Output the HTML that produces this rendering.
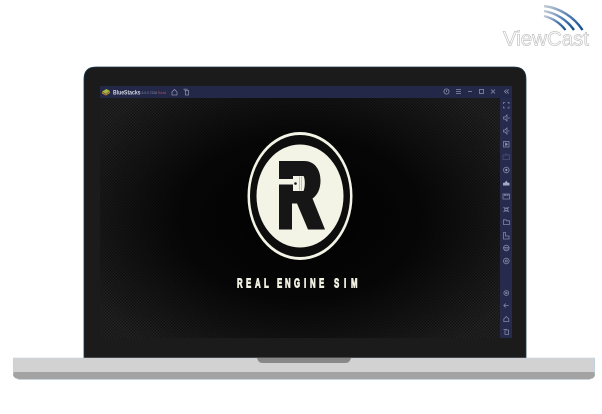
<!DOCTYPE html>
<html><head><meta charset="utf-8"><style>
html,body{margin:0;padding:0;background:#fff;width:602px;height:414px;overflow:hidden}
svg{display:block}
</style></head><body>
<svg width="602" height="414" viewBox="0 0 602 414" xmlns="http://www.w3.org/2000/svg">
<defs>
<pattern id="dot" width="3" height="3" patternUnits="userSpaceOnUse"><rect width="1.5" height="1.5" fill="#fff" fill-opacity=".075"/><rect x="1.5" y="1.5" width="1.5" height="1.5" fill="#fff" fill-opacity=".075"/></pattern>
<radialGradient id="vig" cx="300" cy="218" r="240" gradientUnits="userSpaceOnUse" gradientTransform="translate(300 218) scale(1 .68) translate(-300 -218)"><stop offset="0" stop-color="#000" stop-opacity=".97"/><stop offset=".5" stop-color="#000" stop-opacity=".8"/><stop offset="1" stop-color="#000" stop-opacity=".05"/></radialGradient>
<linearGradient id="arc" x1="0" y1="0" x2="1" y2="1"><stop offset="0" stop-color="#c4ccd6"/><stop offset=".5" stop-color="#5580b4"/><stop offset="1" stop-color="#124c8c"/></linearGradient>
<filter id="soft" x="-5%" y="-5%" width="110%" height="110%"><feGaussianBlur stdDeviation=".35"/></filter>
<filter id="soft2" x="-5%" y="-5%" width="110%" height="110%"><feGaussianBlur stdDeviation=".3"/></filter>
</defs>

<!-- ViewCast logo -->
<g fill="none" stroke="url(#arc)" stroke-linecap="butt" filter="url(#soft)">
<path d="M544 6C560 8 574 17 582.500 30" stroke-width="2.400"/>
<path d="M544 11C556 13 567 20 574 30" stroke-width="2.400"/>
<path d="M544 16C552 18 560 23 565.500 30" stroke-width="2.200"/>
</g>
<text x="503" y="45.500" font-family="Liberation Sans, sans-serif" font-size="20" fill="#fff" stroke="#c4c4c4" stroke-width=".7" textLength="86" lengthAdjust="spacingAndGlyphs" filter="url(#soft2)">ViewCast</text>

<!-- Laptop body -->
<path d="M84 358V79Q84 67 96 67H514Q526 67 526 79V358Z" fill="#1b1b1b"/>
<path d="M84 358V79Q84 67 96 67H514Q526 67 526 79V358" fill="none" stroke="#1c3a4f" stroke-width=".8"/>

<!-- Screen -->
<rect x="100" y="98" width="400" height="240" fill="#151515"/>
<rect x="100" y="98" width="400" height="240" fill="url(#dot)"/>
<rect x="100" y="98" width="400" height="240" fill="url(#vig)"/>

<!-- Title bar -->
<rect x="100" y="86" width="412" height="12" fill="#232848"/>
<rect x="500" y="98" width="12" height="240" fill="#262b4e"/>
<g filter="url(#soft2)">
<path d="M102 91.500L106.500 89L110 91L106 94Z" fill="#a5b83e"/>
<path d="M102 92L106 94.500L110 91.500V93L106 95.500L102 93.500Z" fill="#c98c2e"/>
<text x="113" y="94.500" font-family="Liberation Sans, sans-serif" font-size="6.300" font-weight="bold" fill="#d5d8e4" textLength="27.500" lengthAdjust="spacingAndGlyphs">BlueStacks</text>
<text x="141.500" y="94.200" font-family="Liberation Sans, sans-serif" font-size="3.800" fill="#8a8ea6" textLength="15.500" lengthAdjust="spacingAndGlyphs">5.0.0.7228</text>
<text x="158" y="94.200" font-family="Liberation Sans, sans-serif" font-size="3.800" fill="#a8515f" textLength="8" lengthAdjust="spacingAndGlyphs">Beta</text>
<g fill="none" stroke="#8b8fa9" stroke-width=".8">
<path d="M172 92L174.500 89.500L177 92V95H172Z"/>
<path d="M184.500 90.500H188.500V95H185.500V90.500"/><path d="M183.500 89.200H187.500"/>
<circle cx="446.500" cy="91.500" r="2.600"/><path d="M446.500 90V92"/>
<path d="M456 89.500H461M456 91.500H461M456 93.500H461"/>
<path d="M468 91.500H472"/>
<rect x="479.500" y="89.500" width="4" height="4"/>
<path d="M491 89.500L495 93.500M495 89.500L491 93.500"/>
<path d="M506.500 89.500L504.500 91.500L506.500 93.500M508.800 89.500L506.800 91.500L508.800 93.500"/>
</g>

<!-- Sidebar icons -->
<g fill="none" stroke="#8488a6" stroke-width=".8">
<path d="M503.500 104V102.500H505M507.500 102.500H509V104M509 106.500V108H507.500M505 108H503.500V106.500"/>
<path d="M503.500 117H505L507 115V121L505 119H503.500ZM508 118H510"/>
<path d="M503.500 130H505L507 128V134L505 132H503.500ZM508 131H509.500"/>
<rect x="503.500" y="141.500" width="5.500" height="5.500"/>
<path d="M505.500 143V145.500L507.500 144.200Z" fill="#d4d6e4"/>
<g opacity=".4"><rect x="503" y="155" width="6.500" height="4.500"/><path d="M506 155V153"/></g>
<circle cx="506.300" cy="170" r="2.800"/><circle cx="506.300" cy="170" r=".8" fill="#d4d6e4"/>
</g>
<path d="M503 185.500V183L505 182.500L506.200 180.500L507.500 182.500L509.500 183V185.500Z" fill="#a6a9c2"/>
<g fill="none" stroke="#8488a6" stroke-width=".8">
<path d="M503 194V199H509.500V194H508V195.500H507V194H505.500V195.500H504.500V194Z"/>
<path d="M503.500 207L505 208.500H507.500L509 207M503.500 212L505 210.500H507.500L509 212"/><rect x="504.800" y="208" width="3" height="3"/>
<path d="M503.500 224.500V219.800H506L506.800 220.800H509.500V224.500Z"/>
<path d="M503.500 232.500H505.500V236H509V239H503.500Z"/>
<circle cx="506.300" cy="248" r="2.800"/><path d="M504 247.500H508.500M504 249H508.500"/>
<circle cx="506.300" cy="261" r="2.800"/><circle cx="506.300" cy="261" r="1"/>
<circle cx="506.300" cy="293" r="2.400"/><circle cx="506.300" cy="293" r=".8"/>
<path d="M508.800 305.500H503.800M505.800 303.500L503.800 305.500L505.800 307.500"/>
<path d="M503.800 319L506.300 316.500L508.800 319V321.500H503.800Z"/>
<path d="M504.200 330H508.500V334.500H505V331"/><path d="M503.500 329.500H507"/>
</g>
</g>

<!-- Logo -->
<g filter="url(#soft2)">
<ellipse cx="300" cy="196" rx="52.500" ry="64" fill="#f3f4e6"/>
<ellipse cx="300" cy="196" rx="50" ry="61" fill="#0d0d0d"/>
<ellipse cx="300" cy="196" rx="43.500" ry="51.500" fill="#f3f4e6"/>
<path fill-rule="evenodd" fill="#141414" d="M279 161H304C315 161 320.500 170 320.500 180.500C320.500 189 317.500 195 312.500 198.500L325 229.500H308L297 203.500H292V229.500H279V184.500H293V191H303.500C305 188 305.500 179 303.500 176H293V179H279Z"/>
<circle cx="295.500" cy="183.500" r="1.300" fill="#141414"/>
<path d="M299.500 176.500V190.500M301.500 176.500V190.500" stroke="#141414" stroke-width=".5" opacity=".45"/>
</g>

<g transform="scale(.6 1)" filter="url(#soft2)"><text x="395 410 425 440 461.700 475 490 506.700 516.700 531.700 556.700 573.300 585" y="287.500" font-family="Liberation Sans, sans-serif" font-size="13" font-weight="bold" fill="#f0f0e2" stroke="#f0f0e2" stroke-width=".9">REALENGINESIM</text></g>

<!-- Base -->
<path d="M13 358H595V372H13Z" fill="#d2d2d2"/>
<path d="M13 372H595V374Q595 379 589 379H20Q13 379 13 374Z" fill="#a3a3a3"/>
<path d="M13 358H595" stroke="#c4d4e2" stroke-width=".6"/>
<path d="M13.300 358V374M594.700 358V374" stroke="#bed3e6" stroke-width=".7"/>
<path d="M18 379.300H590" stroke="#a7bdd0" stroke-width=".7"/>
<path d="M257 358H351Q350 363 345 363H263Q258 363 257 358Z" fill="#888"/>
</svg>
</body></html>
